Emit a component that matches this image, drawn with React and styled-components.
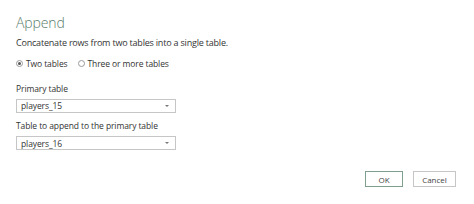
import React from "react";
import styled, { createGlobalStyle } from "styled-components";

const Global = createGlobalStyle`
  html, body { margin: 0; padding: 0; background: #fff; }
  body { font-family: "Open Sans", "Noto Sans", sans-serif; color: #333; }
`;

const Dialog = styled.div`
  width: 474px;
  height: 204px;
  box-sizing: border-box;
  padding: 13.5px 16px 0 16px;
  display: flex;
  flex-direction: column;
`;

const Title = styled.h1`
  margin: 0;
  font-size: 14px;
  font-weight: 300;
  letter-spacing: -0.1px;
  color: #5a7d6b;
  line-height: 18px;
`;

const Desc = styled.p`
  margin: 5px 0 0 0;
  font-size: 9px;
  letter-spacing: -0.2px;
  line-height: 12px;
  color: #333;
`;

const RadioRow = styled.div`
  display: flex;
  gap: 10px;
  margin-top: 9px;
  font-size: 8.5px;
  letter-spacing: -0.1px;
  line-height: 12px;
`;

const RadioLabel = styled.label`
  display: flex;
  align-items: center;
  gap: 3px;
`;

const RadioDot = styled.span`
  width: 7px;
  height: 7px;
  border-radius: 50%;
  border: 1px solid #9a9a9a;
  box-sizing: border-box;
  display: inline-flex;
  align-items: center;
  justify-content: center;
  &::after {
    content: "";
    width: 3px;
    height: 3px;
    border-radius: 50%;
    background: ${(p) => (p.$checked ? "#555" : "transparent")};
  }
`;

const Field = styled.div`
  display: flex;
  flex-direction: column;
  margin-top: ${(p) => p.$top}px;
`;

const Label = styled.div`
  font-size: 8.5px;
  letter-spacing: -0.1px;
  line-height: 12px;
  color: #333;
`;

const Select = styled.div`
  margin-top: 4px;
  width: 160px;
  height: 14px;
  box-sizing: border-box;
  border: 1px solid #c6c6c6;
  display: flex;
  align-items: center;
  justify-content: space-between;
  padding: 0 6px 0 4px;
  font-size: 8.5px;
  letter-spacing: -0.1px;
  color: #333;
`;

const Caret = styled.span`
  width: 0;
  height: 0;
  border-left: 2px solid transparent;
  border-right: 2px solid transparent;
  border-top: 2px solid #777;
`;

const Footer = styled.div`
  display: flex;
  justify-content: flex-end;
  gap: 10px;
  margin-top: 21px;
  padding-right: 2px;
`;

const Button = styled.button`
  height: 16px;
  width: ${(p) => p.$w}px;
  box-sizing: border-box;
  background: #fff;
  border: 1px solid ${(p) => (p.$primary ? "#7fa08e" : "#c6c6c6")};
  font-family: inherit;
  font-size: 8px;
  color: #444;
  padding: 0;
`;

export default function App() {
  return (
    <>
      <Global />
      <Dialog>
        <Title>Append</Title>
        <Desc>Concatenate rows from two tables into a single table.</Desc>
        <RadioRow>
          <RadioLabel><RadioDot $checked />Two tables</RadioLabel>
          <RadioLabel><RadioDot />Three or more tables</RadioLabel>
        </RadioRow>
        <Field $top={13}>
          <Label>Primary table</Label>
          <Select>players_15<Caret /></Select>
        </Field>
        <Field $top={7.5}>
          <Label>Table to append to the primary table</Label>
          <Select>players_16<Caret /></Select>
        </Field>
        <Footer>
          <Button $primary $w={38}>OK</Button>
          <Button $w={43}>Cancel</Button>
        </Footer>
      </Dialog>
    </>
  );
}
